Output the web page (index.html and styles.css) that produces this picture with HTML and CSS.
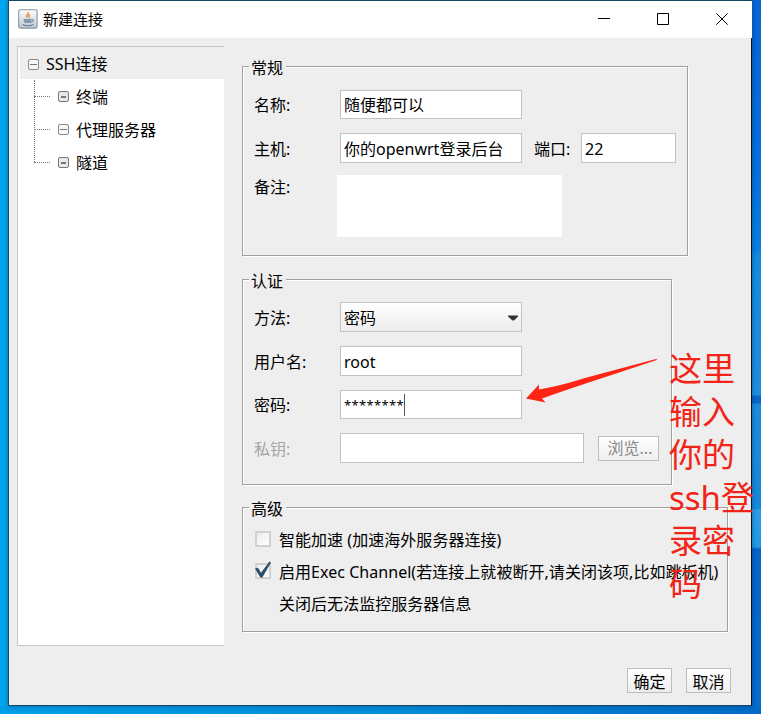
FILE: index.html
```
<!DOCTYPE html>
<html lang="zh-CN">
<head>
<meta charset="utf-8">
<title>新建连接</title>
<link rel="stylesheet" href="styles.css">
</head>
<body>
<div class="window">
  <header class="titlebar">
    <svg class="app-icon" width="20" height="20" viewBox="0 0 20 20">
      <defs><linearGradient id="tile" x1="0" y1="0" x2="0" y2="1"><stop offset="0" stop-color="#fdfdfd"/><stop offset="1" stop-color="#bfc8d0"/></linearGradient></defs>
      <rect x=".7" y=".7" width="18.4" height="18.4" rx="1.5" fill="url(#tile)" stroke="#8496a8" stroke-width="1.1"/>
      <path d="M10.2 3.2c1.4 2-3.200 2.800-1 5.200M11.800 5.300c-2.400 1.400.4 2-1.200 3.800" fill="none" stroke="#e5924c" stroke-width="1.500"/>
      <path d="M5.500 10h8c0 3-1 4-2.500 4H8c-1.500 0-2.500-1.500-2.500-4z" fill="#8298ad"/>
      <path d="M13.500 10.500c3-.5 2 2.500-1 2.700M4.500 15.500c2 1.500 8.500 1.500 11 0" fill="none" stroke="#6c869f" stroke-width="1.100"/>
    </svg>
    <span class="title">新建连接</span>
    <div class="controls">
      <svg width="12" height="12" viewBox="0 0 12 12"><path d="M0 5.500h12" /></svg>
      <svg width="12" height="12" viewBox="0 0 12 12"><path d="M.5.500h11v11H.5z"/></svg>
      <svg width="12" height="12" viewBox="0 0 12 12"><path d="M.3.300l11.400 11.400M11.700.300L.3 11.700"/></svg>
    </div>
  </header>
  <main class="body">
    <nav class="tree">
      <div class="node root"><i class="toggle"></i><span>SSH连接</span></div>
      <div class="children">
        <div class="node"><i class="toggle bold"></i><span>终端</span></div>
        <div class="node"><i class="toggle"></i><span>代理服务器</span></div>
        <div class="node"><i class="toggle bold"></i><span>隧道</span></div>
      </div>
    </nav>
    <form class="form">
      <section class="group general">
        <h2 class="legend">常规</h2>
        <div class="row short"><label>名称:</label><div class="field">随便都可以</div></div>
        <div class="row host"><label>主机:</label><div class="field">你的openwrt登录后台</div><label class="port-label">端口:</label><div class="field port">22</div></div>
        <div class="row notes-row"><label>备注:</label><div class="notes"></div></div>
      </section>
      <section class="group auth">
        <h2 class="legend">认证</h2>
        <div class="row"><label>方法:</label><div class="field select">密码<svg width="10" height="6" viewBox="0 0 10 6"><path d="M0 .5h10v1L6 5.500H4.500L0 1.500z" fill="#333"/></svg></div></div>
        <div class="row"><label>用户名:</label><div class="field">root</div></div>
        <div class="row short"><label>密码:</label><div class="field"><span class="stars">********</span><i class="caret"></i></div></div>
        <div class="row"><label class="disabled">私钥:</label><div class="field key"></div><button type="button" class="btn browse" disabled>浏览...</button></div>
      </section>
      <section class="group advanced">
        <h2 class="legend">高级</h2>
        <div class="option"><i class="check"></i><span>智能加速 (加速海外服务器连接)</span></div>
        <div class="option"><i class="check"><svg width="18" height="18" viewBox="0 0 18 18"><path d="M1 7.500l3-.7 3 5L15.500.6 17 1.500 8.300 16.500H6.300z" fill="#2c4e68"/></svg></i><span>启用Exec Channel(若连接上就被断开,请关闭该项,比如跳板机)</span></div>
        <div class="option hint"><span>关闭后无法监控服务器信息</span></div>
      </section>
    </form>
  </main>
  <footer class="actions">
    <button type="button" class="btn">确定</button>
    <button type="button" class="btn">取消</button>
  </footer>
</div>
<svg class="arrow" width="136" height="50" viewBox="0 0 136 50"><path d="M1 43.500L14 29.500V34.500Q35 31 60 23L131 4l1.500.8L85 20.500Q45 33.500 17 43.500l3.500 4z" fill="#ff2414"/></svg>
<div class="annotation">这里<br>输入<br>你的<br>ssh登<br>录密<br>码</div>
</body>
</html>
```

FILE: styles.css
```
* { box-sizing: border-box; }
body {
  margin: 0;
  width: 761px;
  height: 714px;
  overflow: hidden;
  font: 16px/20px "Noto Sans", "Noto Sans CJK SC", sans-serif;
  color: #000;
  background:
    linear-gradient(90deg, #00a7ed 0 8px, transparent 8px),
    linear-gradient(#0865d3 0, #0670dc 160px, #0780e0 250px, #168bdd 255px, #1d8fe1 395px, #0867cb 396px 403px, #1c8ddd 404px, #1689dc 508px, #2a9de8 510px, #239ae6 547px, #0764cb 549px, #066ccd 700px, #0068c8 714px);
}
body::before {
  content: "";
  position: absolute;
  inset: 706px 10px 0 0;
  background: linear-gradient(90deg, #009fe7, #008bd8 55%, #006cc9);
}
.window {
  position: relative;
  width: 744px;
  height: 706px;
  margin-left: 8px;
  background: #eee;
  border: 1px solid #174965;
  border-right-color: #071523;
  box-shadow: 0 0 5px rgba(0, 30, 70, .45);
}
.titlebar {
  display: flex;
  align-items: center;
  width: 743px;
  height: 37px;
  padding-left: 9px;
  background: #fff;
}
.app-icon { margin-top: -2px; }
.title { margin: -2px 0 0 5px; font-size: 15px; }
.controls { display: flex; gap: 47px; margin: -2px 0 0 auto; padding-right: 24px; }
.controls svg { fill: none; stroke: #000; stroke-width: 1; }
.body { display: flex; height: 608px; padding: 8px 0 0 8px; }
.tree {
  width: 207px;
  height: 600px;
  background: #fff;
  border: solid #c4c4c4;
  border-width: 1px 0 1px 1px;
}
.node { display: flex; align-items: center; height: 33px; }
.root { height: 32px; margin-left: 2px; padding: 2px 0 0 8px; background: #eee; }
.toggle {
  display: block;
  width: 11px;
  height: 11px;
  margin-right: 7px;
  border: 1px solid #8a8a8a;
  border-radius: 2px;
  background: linear-gradient(#777, #777) center / 7px 1px no-repeat, #f8f8f8;
}
.toggle.bold { background: linear-gradient(#777, #777) center / 5px 2px no-repeat, #e8e8e8; border-color: #777; }
.children {
  position: relative;
  width: 190px;
  margin: 1px 0 0 16px;
}
.children::before {
  content: "";
  position: absolute;
  left: 0;
  top: 0;
  height: 82px;
  border-left: 1px dotted #777;
}
.children .node::before { content: ""; width: 16px; margin-right: 8px; border-top: 1px dotted #777; }
.form { margin-left: 18px; padding-top: 20px; }
.group {
  border: 1px solid #a0a0a0;
  box-shadow: 1px 1px 0 #fff, inset 1px 1px 0 #fff;
  padding-left: 11px;
}
.general { width: 446px; height: 190px; }
.auth { width: 430px; height: 206px; margin-top: 23px; }
.advanced { width: 486px; height: 125px; margin-top: 22px; }
.legend {
  width: 37px;
  height: 20px;
  margin: -9px 0 11px -5px;
  padding-left: 2px;
  font: inherit;
  white-space: nowrap;
  background: #eee;
}
.general .legend { margin-bottom: 12px; }
.advanced .legend { margin-bottom: 5px; }
.row { display: flex; align-items: center; height: 30px; margin-bottom: 14px; white-space: nowrap; }
.row.short { height: 29px; }
.row.host { margin-bottom: 12px; }
.row label { width: 86px; padding-top: 2px; }
.row.short label { padding-top: 1px; }
.row .port-label { width: 47px; margin-left: 12px; }
.row .disabled { color: #a5a5a5; }
.row.notes-row { height: 62px; align-items: flex-start; }
.row.notes-row label { width: 83px; padding-top: 2px; }
.notes { width: 225px; height: 62px; background: #fff; }
.field {
  display: flex;
  align-items: center;
  width: 182px;
  height: 100%;
  padding: 1px 3px 0;
  border: 1px solid #c2c2c2;
  background: #fff;
}
.port { width: 95px; }
.key { width: 244px; }
.select { justify-content: space-between; background: linear-gradient(#fff, #ececec); }
.stars { font-size: 13px; letter-spacing: .35px; }
.caret { width: 1px; height: 22px; background: #555; }
.btn {
  width: 45px;
  height: 25px;
  padding: 2px 0 0;
  border: 1px solid #bdbdbd;
  background: linear-gradient(#fff, #eee);
  color: #000;
  font: inherit;
  line-height: 20px;
}
.browse { width: 61px; margin-left: 14px; padding: 0 0 0 3px; color: #888; }
.option { display: flex; align-items: center; height: 32px; white-space: nowrap; letter-spacing: .04px; }
.check {
  position: relative;
  width: 16px;
  height: 16px;
  margin: -2px 8px 0 1px;
  border: 2px solid #d0d0d0;
  background: linear-gradient(135deg, #ececec, #fff);
}
.check svg { position: absolute; left: -3px; top: -4px; }
.hint { padding-left: 25px; }
.actions { display: flex; justify-content: flex-end; gap: 14px; margin-top: 22px; padding-right: 20px; }
.arrow { position: absolute; left: 525px; top: 355px; }
.annotation {
  position: absolute;
  left: 669px;
  top: 347px;
  font-size: 33px;
  line-height: 43px;
  color: #f22418;
  white-space: nowrap;
}
```
